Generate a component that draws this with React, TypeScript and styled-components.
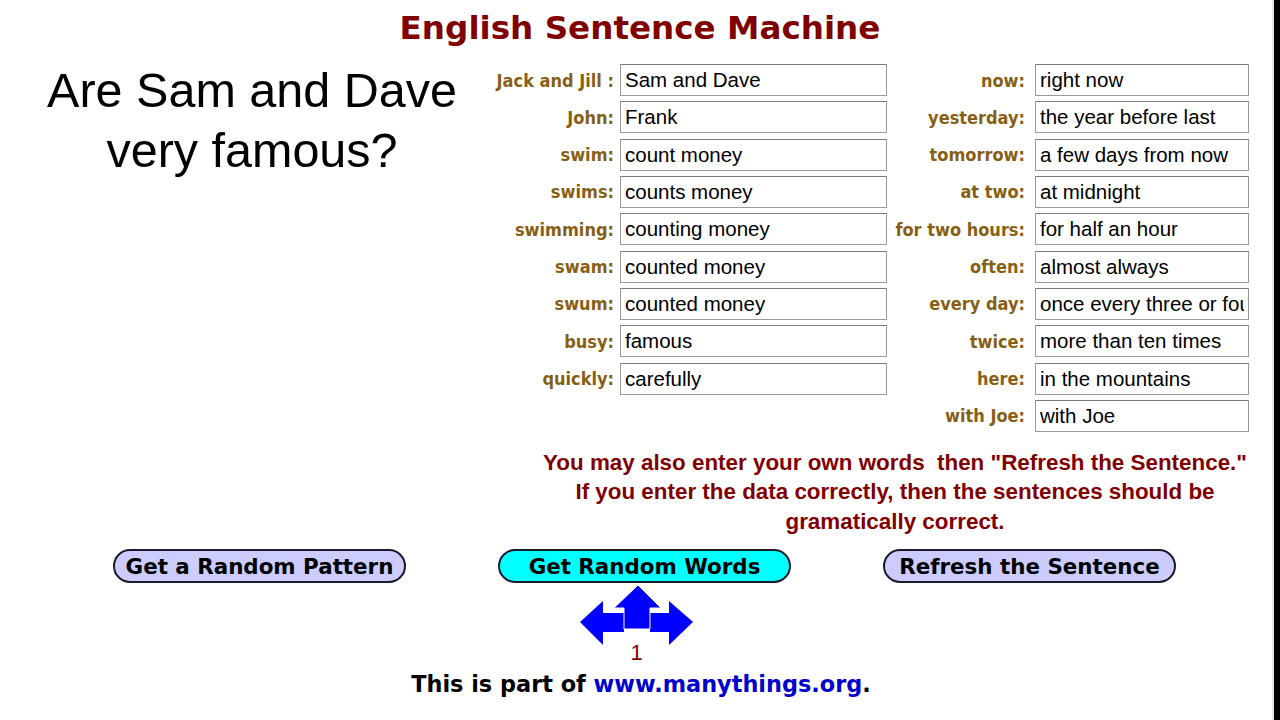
import React from 'react';
import styled, { createGlobalStyle } from 'styled-components';

const GlobalStyle = createGlobalStyle`
  html, body {
    margin: 0;
    padding: 0;
    background: #fff;
  }
  body {
    font-family: "DejaVu Sans", "Liberation Sans", sans-serif;
  }
`;

type Field = { label: string; value: string };

const leftFields: Field[] = [
  { label: 'Jack and Jill :', value: 'Sam and Dave' },
  { label: 'John:', value: 'Frank' },
  { label: 'swim:', value: 'count money' },
  { label: 'swims:', value: 'counts money' },
  { label: 'swimming:', value: 'counting money' },
  { label: 'swam:', value: 'counted money' },
  { label: 'swum:', value: 'counted money' },
  { label: 'busy:', value: 'famous' },
  { label: 'quickly:', value: 'carefully' },
];

const rightFields: Field[] = [
  { label: 'now:', value: 'right now' },
  { label: 'yesterday:', value: 'the year before last' },
  { label: 'tomorrow:', value: 'a few days from now' },
  { label: 'at two:', value: 'at midnight' },
  { label: 'for two hours:', value: 'for half an hour' },
  { label: 'often:', value: 'almost always' },
  { label: 'every day:', value: 'once every three or four years' },
  { label: 'twice:', value: 'more than ten times' },
  { label: 'here:', value: 'in the mountains' },
  { label: 'with Joe:', value: 'with Joe' },
];

export default function App() {
  return (
    <Screen>
      <GlobalStyle />
      <Page>
        <Title>English Sentence Machine</Title>
        <Top>
          <Question>
            Are Sam and Dave
            <br />
            very famous?
          </Question>
          <Controls>
            <Forms>
              <FieldGrid $labelWidth={126} $inputWidth={267} $gap={6}>
                {leftFields.map((f) => (
                  <React.Fragment key={f.label}>
                    <Label>{f.label}</Label>
                    <WordInput defaultValue={f.value} />
                  </React.Fragment>
                ))}
              </FieldGrid>
              <FieldGrid $labelWidth={132} $inputWidth={214} $gap={10}>
                {rightFields.map((f) => (
                  <React.Fragment key={f.label}>
                    <Label>{f.label}</Label>
                    <WordInput defaultValue={f.value} />
                  </React.Fragment>
                ))}
              </FieldGrid>
            </Forms>
            <Notice>
              You may also enter your own words&nbsp; then "Refresh the Sentence."
              <br />
              If you enter the data correctly, then the sentences should be
              <br />
              gramatically correct.
            </Notice>
          </Controls>
        </Top>
        <ButtonRow>
          <PillButton>Get a Random Pattern</PillButton>
          <PillButton $active>Get Random Words</PillButton>
          <PillButton>Refresh the Sentence</PillButton>
        </ButtonRow>
        <Nav>
          <svg width="116" height="63" viewBox="0 0 116 63">
            <polygon
              fill="#0000ff"
              points="1,38 24,17 24,29 45,29 45,48 24,48 24,61"
            />
            <polygon
              fill="#0000ff"
              points="114,38 90,17 90,29 71,29 71,48 90,48 90,61"
            />
            <polygon
              fill="#0000ff"
              stroke="#fff"
              strokeWidth="1"
              points="59,1 82,24 71,24 71,45 45,45 45,24 35,24"
            />
          </svg>
          <Counter>1</Counter>
        </Nav>
        <Footer>
          This is part of <SiteLink href="#">www.manythings.org</SiteLink>.
        </Footer>
      </Page>
      <EdgeStrip />
    </Screen>
  );
}

const Screen = styled.div`
  width: 1280px;
  height: 720px;
  display: flex;
  overflow: hidden;
  background: #fff;
`;

const Page = styled.div`
  flex: 1;
  display: flex;
  flex-direction: column;
`;

const EdgeStrip = styled.div`
  width: 6px;
  background: #000;
  border-left: 2px solid #e4e4e4;
`;

const Title = styled.h1`
  margin: 6px 0 0;
  text-align: center;
  font-family: "DejaVu Sans", sans-serif;
  font-size: 32.6px;
  line-height: 44px;
  font-weight: bold;
  color: #800000;
  padding-left: 8px;
`;

const Top = styled.div`
  display: flex;
  margin-top: 14px;
`;

const Question = styled.div`
  box-sizing: border-box;
  width: 488px;
  padding-left: 16px;
  flex-shrink: 0;
  text-align: center;
  font-family: "Liberation Sans", Arial, sans-serif;
  font-size: 48.5px;
  line-height: 60px;
  color: #000;
  margin-top: -4px;
`;

const Controls = styled.div`
  flex: 1;
  display: flex;
  flex-direction: column;
`;

const Forms = styled.div`
  display: flex;
  align-items: flex-start;
  gap: 6px;
`;

const FieldGrid = styled.div<{ $labelWidth: number; $inputWidth: number; $gap: number }>`
  display: grid;
  grid-template-columns: ${(p) => p.$labelWidth}px ${(p) => p.$inputWidth}px;
  column-gap: ${(p) => p.$gap}px;
  row-gap: 5.33px;
  align-items: center;
`;

const Label = styled.span`
  text-align: right;
  white-space: nowrap;
  font-family: "DejaVu Sans Condensed", "DejaVu Sans", sans-serif;
  font-stretch: condensed;
  font-weight: bold;
  font-size: 18px;
  color: #875f14;
`;

const WordInput = styled.input`
  box-sizing: border-box;
  height: 32px;
  width: 100%;
  margin: 0;
  padding: 0 4px;
  border: 1px solid #9a9a9a;
  border-top-color: #7a7a7a;
  background: #fff;
  font-family: "Liberation Sans", Arial, sans-serif;
  font-size: 20.5px;
  color: #000;
  outline: none;
`;

const Notice = styled.p`
  margin: 16px 0 0;
  padding-left: 30px;
  text-align: center;
  font-family: "Liberation Sans", sans-serif;
  font-weight: bold;
  font-size: 22.4px;
  line-height: 29.5px;
  color: #800000;
`;

const ButtonRow = styled.div`
  display: flex;
  gap: 92px;
  padding-left: 113px;
  margin-top: 13px;
`;

const PillButton = styled.button<{ $active?: boolean }>`
  box-sizing: border-box;
  width: 293px;
  height: 34px;
  padding: 0;
  border: 2px solid #1a1a2a;
  border-radius: 17px;
  background: ${(p) => (p.$active ? '#00ffff' : '#ccccff')};
  font-family: "DejaVu Sans", sans-serif;
  font-weight: bold;
  font-size: 21.4px;
  color: #000;
  cursor: pointer;
`;

const Nav = styled.div`
  display: flex;
  flex-direction: column;
  align-items: center;
  padding-left: 1px;
  margin-top: 1px;
`;

const Counter = styled.span`
  font-family: "Liberation Sans", Arial, sans-serif;
  font-size: 22px;
  line-height: 22px;
  margin-top: -5px;
  color: #800000;
`;

const Footer = styled.div`
  text-align: center;
  margin-top: 6px;
  padding-left: 10px;
  font-family: "DejaVu Sans", sans-serif;
  font-weight: bold;
  font-size: 22.4px;
  line-height: 28px;
  color: #000;
`;

const SiteLink = styled.a`
  color: #0000cc;
  text-decoration: none;
`;
